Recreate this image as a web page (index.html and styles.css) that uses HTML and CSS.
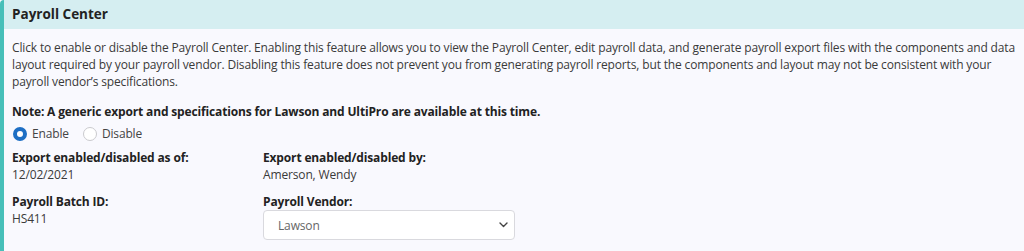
FILE: index.html
```html
<!DOCTYPE html>
<html>
<head>
<meta charset="utf-8">
<link rel="stylesheet" href="styles.css">
</head>
<body>
<div class="panel">
  <div class="panel-header">Payroll Center</div>
  <div class="panel-body">
    <p class="desc">Click to enable or disable the Payroll Center. Enabling this feature allows you to view the Payroll Center, edit payroll data, and generate payroll export files with the components and data layout required by your payroll vendor. Disabling this feature does not prevent you from generating payroll reports, but the components and layout may not be consistent with your payroll vendor’s specifications.</p>
    <p class="note">Note: A generic export and specifications for Lawson and UltiPro are available at this time.</p>
    <div class="radios">
      <label class="radio"><span class="dot checked"></span>Enable</label>
      <label class="radio"><span class="dot"></span>Disable</label>
    </div>
    <div class="grid">
      <div class="field">
        <div class="label">Export enabled/disabled as of:</div>
        <div class="value">12/02/2021</div>
      </div>
      <div class="field">
        <div class="label">Export enabled/disabled by:</div>
        <div class="value">Amerson, Wendy</div>
      </div>
      <div class="field">
        <div class="label">Payroll Batch ID:</div>
        <div class="value">HS411</div>
      </div>
      <div class="field">
        <div class="label">Payroll Vendor:</div>
        <div class="select">
          <span>Lawson</span>
          <svg width="9" height="6" viewBox="0 0 9 6"><path d="M1 1 L4.5 4.5 L8 1" fill="none" stroke="#444" stroke-width="1.4" stroke-linecap="round" stroke-linejoin="round"/></svg>
        </div>
      </div>
    </div>
  </div>
</div>
</body>
</html>
```

FILE: styles.css
```css
html, body {
  margin: 0;
  padding: 0;
  background: #f9f9fe;
}
body {
  font-family: "Open Sans", "Noto Sans", sans-serif;
  color: #333;
  font-size: 12px;
  letter-spacing: -0.15px;
}
.panel {
  border-left: 4px solid #47bfb9;
  border-top-left-radius: 4px;
  background: #f9f9fe;
  height: 251px;
  box-sizing: border-box;
}
.panel-header {
  background: #d5eef1;
  height: 29px;
  line-height: 29px;
  font-size: 13.5px;
  font-weight: 700;
  color: #222;
  padding-left: 8px;
  box-sizing: border-box;
  letter-spacing: 0;
}
.panel-body {
  padding: 10px 8px 0 8px;
}
.desc {
  margin: 0;
  line-height: 17px;
  color: #3a3a3a;
}
.note {
  margin: 13px 0 0 0;
  font-weight: 700;
  line-height: 17px;
  color: #222;
}
.radios {
  display: flex;
  gap: 13px;
  margin-top: 3px;
  height: 21px;
  align-items: center;
}
.radio {
  display: flex;
  align-items: center;
  gap: 5px;
  color: #444;
}
.dot {
  width: 14px;
  height: 14px;
  border-radius: 50%;
  border: 1px solid #cacace;
  background: #fff;
  box-sizing: border-box;
  margin-left: 1px;
}
.dot.checked {
  border: 4px solid #1e6fc4;
  background: #fff;
}
.grid {
  display: grid;
  grid-template-columns: 251px 252px;
  row-gap: 10px;
  margin-top: 5px;
}
.label {
  font-weight: 700;
  line-height: 17px;
  color: #222;
}
.value {
  line-height: 17px;
  color: #3a3a3a;
}
.select {
  height: 30px;
  border: 1px solid #d9d9de;
  border-radius: 4px;
  background: #fff;
  box-sizing: border-box;
  display: flex;
  align-items: center;
  justify-content: space-between;
  padding: 0 6px 0 14px;
  color: #666;
}
```
